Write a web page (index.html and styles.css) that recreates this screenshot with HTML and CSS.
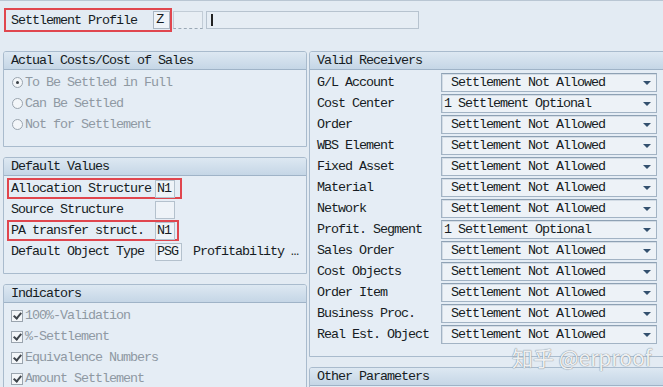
FILE: index.html
```html
<!DOCTYPE html>
<html lang="en">
<head>
    <meta charset="UTF-8">
    <title>Settlement Profile</title>
    <link rel="stylesheet" href="styles.css">
</head>
<body>
    <div class="page">
        <div class="profile-row">
            <div class="mark mark-profile">
                <span class="lbl lbl-profile">Settlement Profile</span>
                <span class="field f-z">Z</span>
            </div>
            <span class="field f-dots"></span>
            <span class="field f-text"><span class="caret"></span></span>
        </div>

        <div class="columns">
            <div class="col">
                <section class="group g-actual">
                    <h2 class="group-head">Actual Costs/Cost of Sales</h2>
                    <div class="group-body">
                        <div class="row off"><span class="radio on"></span>To Be Settled in Full</div>
                        <div class="row off"><span class="radio"></span>Can Be Settled</div>
                        <div class="row off"><span class="radio"></span>Not for Settlement</div>
                    </div>
                </section>

                <section class="group g-defaults">
                    <h2 class="group-head">Default Values</h2>
                    <div class="group-body">
                        <div class="row mark mark-alloc">
                            <span class="lbl">Allocation Structure</span>
                            <span class="field f-short">N1</span>
                        </div>
                        <div class="row">
                            <span class="lbl">Source Structure</span>
                            <span class="field f-short"></span>
                        </div>
                        <div class="row mark mark-pa">
                            <span class="lbl">PA transfer struct.</span>
                            <span class="field f-short">N1</span>
                        </div>
                        <div class="row">
                            <span class="lbl">Default Object Type</span>
                            <span class="field f-psg">PSG</span>
                            <span class="desc">Profitability …</span>
                        </div>
                    </div>
                </section>

                <section class="group g-ind">
                    <h2 class="group-head">Indicators</h2>
                    <div class="group-body">
                        <div class="row off"><span class="check"></span>100%-Validation</div>
                        <div class="row off"><span class="check"></span>%-Settlement</div>
                        <div class="row off"><span class="check"></span>Equivalence Numbers</div>
                        <div class="row off"><span class="check"></span>Amount Settlement</div>
                    </div>
                </section>
            </div>

            <div class="col">
                <section class="group g-recv">
                    <h2 class="group-head">Valid Receivers</h2>
                    <div class="group-body">
                        <div class="row"><span class="rlbl">G/L Account</span><span class="drop"> Settlement Not Allowed</span></div>
                        <div class="row"><span class="rlbl">Cost Center</span><span class="drop">1 Settlement Optional</span></div>
                        <div class="row"><span class="rlbl">Order</span><span class="drop"> Settlement Not Allowed</span></div>
                        <div class="row"><span class="rlbl">WBS Element</span><span class="drop"> Settlement Not Allowed</span></div>
                        <div class="row"><span class="rlbl">Fixed Asset</span><span class="drop"> Settlement Not Allowed</span></div>
                        <div class="row"><span class="rlbl">Material</span><span class="drop"> Settlement Not Allowed</span></div>
                        <div class="row"><span class="rlbl">Network</span><span class="drop"> Settlement Not Allowed</span></div>
                        <div class="row"><span class="rlbl">Profit. Segment</span><span class="drop">1 Settlement Optional</span></div>
                        <div class="row"><span class="rlbl">Sales Order</span><span class="drop"> Settlement Not Allowed</span></div>
                        <div class="row"><span class="rlbl">Cost Objects</span><span class="drop"> Settlement Not Allowed</span></div>
                        <div class="row"><span class="rlbl">Order Item</span><span class="drop"> Settlement Not Allowed</span></div>
                        <div class="row"><span class="rlbl">Business Proc.</span><span class="drop"> Settlement Not Allowed</span></div>
                        <div class="row"><span class="rlbl">Real Est. Object</span><span class="drop"> Settlement Not Allowed</span></div>
                    </div>
                </section>

                <section class="group g-other">
                    <h2 class="group-head">Other Parameters</h2>
                </section>
            </div>
        </div>

        <div class="watermark">知乎 @erproof</div>
    </div>
</body>
</html>
```

FILE: styles.css
```css
body {
    margin: 0;
    background-color: #e3ebf3;
    font-family: "Liberation Mono", "DejaVu Sans Mono", monospace;
    font-size: 13.4px;
    letter-spacing: -1.04px;
    color: #161c23;
    overflow: hidden;
}
.page {
    position: relative;
    width: 663px;
    height: 386px;
    border-top: 1px solid #b9c6d3;
    overflow: hidden;
}

/* top row */
.profile-row {
    display: flex;
    align-items: center;
    margin: 7px 0 0 4px;
    height: 24px;
}
.mark {
    border: 2px solid #e0464e;
    box-sizing: border-box;
}
.mark-profile {
    display: flex;
    align-items: center;
    height: 24px;
    width: 168px;
    padding-left: 5px;
}
.lbl-profile {
    width: 144px;
}
.field {
    display: inline-block;
    box-sizing: border-box;
    height: 18px;
    line-height: 16px;
    border: 1px solid #b4c1cd;
    background-color: #eef3f8;
    padding-left: 2px;
    white-space: pre;
}
.f-z {
    width: 17px;
    border-color: #a9b6c2;
}
.f-dots {
    width: 30px;
    margin-left: 1px;
    background-color: #e8eef4;
    border-color: #c2ccd6;
    border-bottom: 1px dashed #9aa8b5;
}
.f-text {
    width: 213px;
    margin-left: 3px;
    background-color: #e6edf4;
    border-color: #b7c3cf;
}
.caret {
    display: inline-block;
    width: 2px;
    height: 12px;
    margin: 2px 0 0 2px;
    background-color: #222;
    vertical-align: top;
}

/* group boxes */
.columns {
    display: grid;
    grid-template-columns: 304px 358px;
    column-gap: 2px;
    margin: 19px 0 0 3px;
}
.group {
    border: 1px solid #a9bbcd;
    border-radius: 3px 3px 0 0;
    background-color: #e5edf5;
    margin-bottom: 10px;
    padding-bottom: 11px;
}
.group-head {
    margin: 0;
    height: 17px;
    line-height: 18px;
    padding-left: 7px;
    font-size: 13.4px;
    font-weight: normal;
    background: linear-gradient(#dde8f2, #c5d6e6);
    border-bottom: 1px solid #9fb3c7;
    border-radius: 2px 2px 0 0;
}
.group-body {
    padding: 2px 0 0 7px;
}
.row {
    display: flex;
    align-items: center;
    height: 21px;
    white-space: pre;
}
.off {
    color: #8f99a3;
}
.g-recv {
    padding-bottom: 11px;
}
.g-other {
    padding-bottom: 4px;
}

/* radios and checks */
.radio {
    width: 9px;
    height: 9px;
    border: 1px solid #9aa4ae;
    border-radius: 50%;
    background-color: #f3f6f9;
    margin: 0 2px 0 1px;
    position: relative;
}
.radio.on::after {
    content: "";
    position: absolute;
    left: 3px;
    top: 3px;
    width: 3px;
    height: 3px;
    border-radius: 50%;
    background-color: #3a3f45;
}
.check {
    width: 10px;
    height: 10px;
    border: 1px solid #9aa4ae;
    background-color: #f3f6f9;
    margin: 0 2px 0 0;
    position: relative;
}
.check::after {
    content: "";
    position: absolute;
    left: 3px;
    top: 0;
    width: 3px;
    height: 6px;
    border: solid #3f454c;
    border-width: 0 2px 2px 0;
    transform: rotate(40deg);
}

/* default values */
.g-defaults .lbl {
    width: 144px;
}
.mark-alloc,
.mark-pa {
    margin-left: -4px;
    padding-left: 2px;
    height: 21px;
}
.mark-alloc {
    width: 175px;
}
.mark-pa {
    width: 172px;
}
.f-short {
    width: 20px;
    padding-left: 1px;
}
.f-psg {
    width: 27px;
    padding-left: 1px;
}
.desc {
    margin-left: 11px;
}

/* valid receivers */
.rlbl {
    width: 124px;
}
.drop {
    position: relative;
    box-sizing: border-box;
    width: 216px;
    height: 19px;
    line-height: 17px;
    padding-left: 2px;
    border: 1px solid #a2b3c4;
    border-top-color: #8ea1b4;
    background-color: #edf2f7;
    box-shadow: inset 1px 1px 0 #d3dce5;
}
.drop::after {
    content: "";
    position: absolute;
    right: 5px;
    top: 7px;
    border-left: 4px solid transparent;
    border-right: 4px solid transparent;
    border-top: 4px solid #33506e;
}

/* watermark overlay */
.watermark {
    position: absolute;
    left: 512px;
    top: 341px;
    font-family: "Noto Sans CJK SC", "Noto Sans", sans-serif;
    font-size: 21px;
    letter-spacing: 0;
    color: rgba(255, 255, 255, 0.9);
    text-shadow: 0 0 1px #7d8893, 0 0 1px #7d8893;
}
```
